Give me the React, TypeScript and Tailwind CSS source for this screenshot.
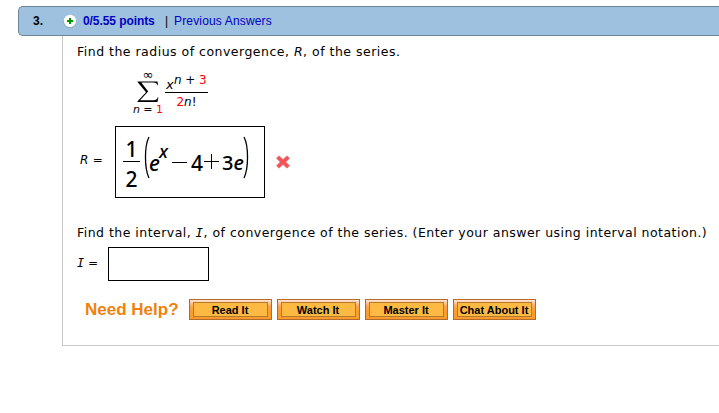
import type { ReactNode } from 'react'

const helpLinks = ['Read It', 'Watch It', 'Master It', 'Chat About It']

function HelpButton({ children }: { children: ReactNode }) {
  return (
    <button className="h-[21px] w-[83px] border border-[#b36b29] bg-linear-to-b from-[#ffe5d3] from-0% via-[#fda75a] via-30% to-[#fb9a2d] to-60% px-[3px] py-[2px]">
      <span className="flex h-[15px] items-center justify-center whitespace-nowrap border border-[#b5782f] bg-[#fdba43] pt-[1px] pr-[1px] text-[11px] leading-none font-bold text-black">
        {children}
      </span>
    </button>
  )
}

function QuestionHeader() {
  return (
    <div className="ml-[18px] flex h-[30px] items-center rounded-l-[5px] border border-r-0 border-[#6c8496] bg-[#9dc1de] text-[12px] leading-none text-[#0000c4]">
      <span className="ml-[14px] w-[30px] font-bold text-black">3.</span>
      <svg className="h-[14px] w-[14px]" viewBox="0 0 14 14">
        <circle cx="7" cy="7.5" r="6.5" fill="#8b989f" />
        <circle cx="7" cy="7" r="6.2" fill="#fff" />
        <path d="M7 4v6M4 7h6" stroke="#009600" strokeWidth="2" />
      </svg>
      <span className="ml-[6px] w-[72px] font-bold tracking-[-0.08px] whitespace-nowrap">0/5.55 points</span>
      <span className="ml-[10px] w-[9px] text-black">|</span>
      <span className="tracking-[0.16px] whitespace-nowrap">Previous Answers</span>
    </div>
  )
}

function Series() {
  return (
    <div className="ml-[69px] flex h-[50px]">
      <div className="flex w-[32px] flex-col items-center">
        <span className="h-[14px] pt-px text-[13px] leading-[14px]">∞</span>
        <svg className="h-[22px] w-[22px]" viewBox="0 0 22 22">
          <path d="M.5.5h20l.6 3.8h-.5C19.8 2.2 18.5 1.6 16 1.6H4.3l6.9 8.9L3 19.2h13.5c2.5 0 3.5-.7 4.3-2.9h.6L20.5 21H.5v-.8L9 11.3.5 1z" fill="#000" />
        </svg>
        <span className="h-[14px] text-[11px] leading-[14px] whitespace-nowrap">
          <i>n</i> = <span className="text-[#f00]">1</span>
        </span>
      </div>
      <div className="mt-[5px] ml-[1px] w-[43px]">
        <div className="flex h-[21px] border-b border-black pl-[1px] whitespace-nowrap">
          <i className="w-[8px] pt-[6px] text-[13px] leading-[14px]">x</i>
          <span className="text-[12px] leading-[16px] tracking-[-0.1px]">
            <i>n</i> + <span className="text-[#f00]">3</span>
          </span>
        </div>
        <div className="text-center text-[12px] leading-[18px]">
          <span className="text-[#f00]">2</span>
          <i>n</i>!
        </div>
      </div>
    </div>
  )
}

function RadiusAnswer() {
  return (
    <div className="flex h-[72px] w-[150px] items-start border border-black pl-[7px] font-['Noto_Sans',sans-serif] text-[21px] leading-none font-medium text-black">
      <div className="mt-[10px] w-[17px] text-center">
        <div className="h-[25px] border-b border-black leading-[24px]">1</div>
        <div className="leading-[34px]">2</div>
      </div>
      <svg className="mt-[9px] ml-[4px] h-[44px] w-[6px]" viewBox="0 0 6 44">
        <path d="M5 1C.3 10 .3 32 5 42" fill="none" stroke="#000" strokeWidth="1.3" />
      </svg>
      <i className="mt-[26px] ml-[-1px] w-[10px]">e</i>
      <i className="mt-[15px] w-[11px] text-[18px]">x</i>
      <svg className="mt-[28px] ml-[2px] h-[15px] w-[15px]" viewBox="0 0 15 15">
        <path d="M0 7.5h15" stroke="#000" strokeWidth="1" />
      </svg>
      <span className="mt-[26px] ml-[4px] w-[12px]">4</span>
      <svg className="mt-[27px] ml-[1px] h-[15px] w-[15px]" viewBox="0 0 15 15">
        <path d="M0 7.5h15M7.5 0v15" stroke="#000" strokeWidth="1" />
      </svg>
      <span className="mt-[26px] ml-[3px] w-[21px] text-[20px] whitespace-nowrap">
        3<i>e</i>
      </span>
      <svg className="mt-[9px] h-[44px] w-[6px]" viewBox="0 0 6 44">
        <path d="M1 1C5.7 10 5.7 32 1 42" fill="none" stroke="#000" strokeWidth="1.3" />
      </svg>
    </div>
  )
}

export default function App() {
  return (
    <div className="h-[413px] w-[719px] overflow-hidden bg-white pt-[6px] font-['Liberation_Sans',sans-serif]">
      <QuestionHeader />
      <div className="ml-[62px] h-[310px] border-b border-l border-[#c6c6c6] font-['DejaVu_Sans',sans-serif] text-[12px] text-black">
        <p className="ml-[14px] pt-[7px] text-[12.5px] leading-[18px] tracking-[0.49px] whitespace-nowrap">
          Find the radius of convergence, <i>R</i>, of the series.
        </p>
        <div className="mt-[6px]">
          <Series />
        </div>
        <div className="mt-[9px] ml-[17px] flex">
          <span className="w-[35px] pt-[25px] text-[12px] leading-[18px] tracking-[0.3px]">
            <i>R</i> =
          </span>
          <RadiusAnswer />
          <svg className="mt-[29px] ml-[11px] h-[14px] w-[14px]" viewBox="0 0 14 14">
            <path d="M3 .8l4 3.8L11 .8l2.5 2.5L9.8 7l3.7 3.8-2.5 2.4-4-3.8-4 3.8-2.5-2.4L4.2 7 .5 3.3z" fill="#f65357" stroke="#df777a" strokeWidth="0.7" strokeLinejoin="round" />
          </svg>
        </div>
        <p className="mt-[26px] ml-[14px] text-[12.5px] leading-[18px] tracking-[0.47px] whitespace-nowrap">
          Find the interval, <i className="font-['DejaVu_Sans_Mono']">I</i>, of convergence of the series. (Enter your answer using interval notation.)
        </p>
        <div className="mt-[5px] ml-[14px] flex">
          <span className="w-[31px] pt-[7px] leading-[18px] whitespace-nowrap">
            <i className="font-['DejaVu_Sans_Mono']">I</i> =
          </span>
          <div className="h-[34px] w-[101px] border border-black" />
        </div>
        <div className="mt-[18px] ml-[22px] flex gap-[5px] font-['Liberation_Sans',sans-serif]">
          <span className="w-[99px] text-[17px] leading-[21px] font-bold whitespace-nowrap text-[#ee820c]">Need Help?</span>
          {helpLinks.map((label) => (
            <HelpButton key={label}>{label}</HelpButton>
          ))}
        </div>
      </div>
    </div>
  )
}
